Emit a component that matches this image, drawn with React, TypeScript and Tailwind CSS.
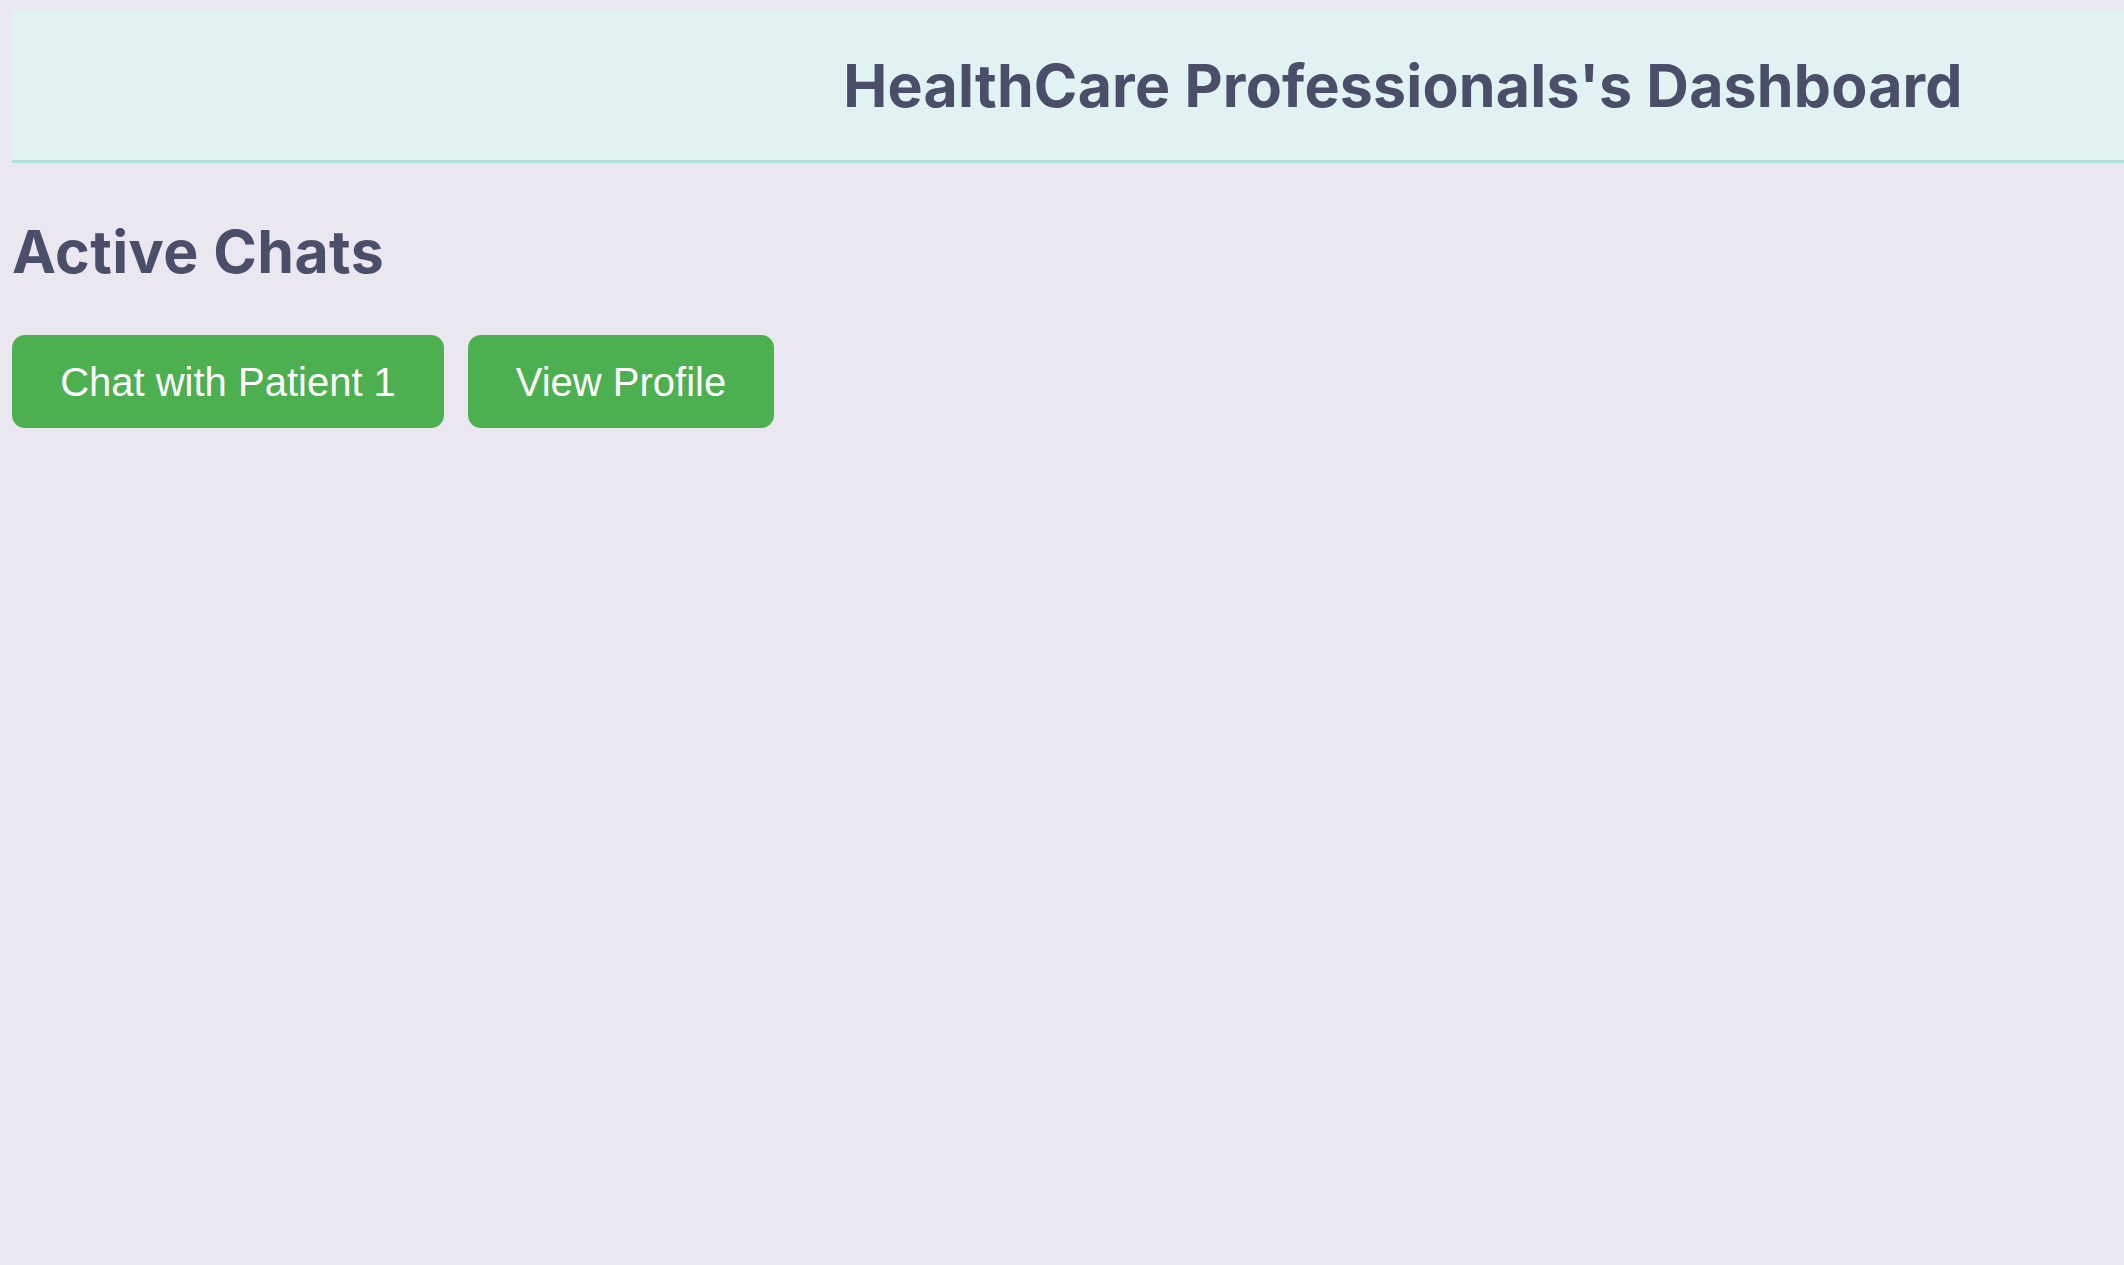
import React from "react";

export default function App() {
  return (
    <div className="min-h-[1265px] w-full bg-[#eae7f1] pt-[10px] pl-[12px] font-['Inter',sans-serif]">
      <header className="flex h-[153px] items-center justify-center border-b-[3px] border-[#b2dfdb] bg-[#e0f2f1] pl-[670px]">
        <h1 className="whitespace-nowrap text-[59px] font-bold leading-none tracking-[0.2px] text-[#4a4e69]">
          HealthCare Professionals's Dashboard
        </h1>
      </header>
      <h2 className="mt-[59px] text-[59px] font-bold leading-none tracking-[0.4px] text-[#4a4e69]">
        Active Chats
      </h2>
      <div className="mt-[54px] flex gap-[24px]">
        <button className="flex h-[93px] w-[432px] items-center justify-center rounded-[13px] bg-[#4caf50] font-['Liberation_Sans',Arial,sans-serif] text-[40px] text-white">
          Chat with Patient 1
        </button>
        <button className="flex h-[93px] w-[306px] items-center justify-center rounded-[13px] bg-[#4caf50] font-['Liberation_Sans',Arial,sans-serif] text-[40px] text-white">
          View Profile
        </button>
      </div>
    </div>
  );
}
